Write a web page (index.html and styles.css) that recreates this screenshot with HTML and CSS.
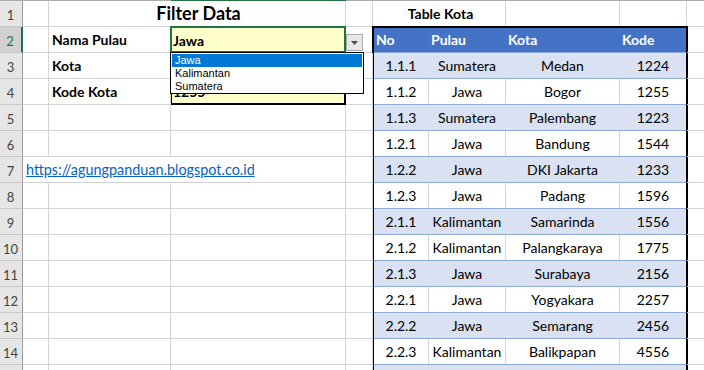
FILE: index.html
```html
<!DOCTYPE html>
<html lang="id">
<head>
    <meta charset="UTF-8">
    <title>Filter Data - Table Kota</title>
    <link rel="stylesheet" href="styles.css">
</head>
<body>
    <div class="sheet">
        <!-- batas bawah header kolom -->
        <div class="bar"></div><div class="bar"></div><div class="bar"></div><div class="bar on"></div><div class="bar"></div>
        <div class="bar"></div><div class="bar"></div><div class="bar"></div><div class="bar"></div><div class="bar"></div>

        <!-- baris 1 -->
        <div class="rh">1</div><div class="c"></div>
        <div class="c span2 title">Filter Data</div>
        <div class="c"></div>
        <div class="c span2 subtitle">Table Kota</div>
        <div class="c"></div><div class="c"></div><div class="c"></div>

        <!-- baris 2 -->
        <div class="rh sel">2</div><div class="c"></div>
        <div class="c b">Nama Pulau</div>
        <div class="pick">
            <div class="cur">Jawa
                <span class="drop-btn"><svg width="7" height="4" viewBox="0 0 7 4"><path d="M0 0h7L3.5 4z" fill="#4d4d4d"/></svg></span>
                <ul class="drop-list">
                    <li class="on">Jawa</li>
                    <li>Kalimantan</li>
                    <li>Sumatera</li>
                </ul>
            </div>
            <div class="val">Bogor</div>
            <div class="val last">1255</div>
        </div>
        <div class="c"></div>
        <div class="kota">
            <div class="kr head"><div>No</div><div>Pulau</div><div>Kota</div><div>Kode</div></div>
            <div class="kr band"><div>1.1.1</div><div>Sumatera</div><div>Medan</div><div>1224</div></div>
            <div class="kr"><div>1.1.2</div><div>Jawa</div><div>Bogor</div><div>1255</div></div>
            <div class="kr band"><div>1.1.3</div><div>Sumatera</div><div>Palembang</div><div>1223</div></div>
            <div class="kr"><div>1.2.1</div><div>Jawa</div><div>Bandung</div><div>1544</div></div>
            <div class="kr band"><div>1.2.2</div><div>Jawa</div><div>DKI Jakarta</div><div>1233</div></div>
            <div class="kr"><div>1.2.3</div><div>Jawa</div><div>Padang</div><div>1596</div></div>
            <div class="kr band"><div>2.1.1</div><div>Kalimantan</div><div>Samarinda</div><div>1556</div></div>
            <div class="kr"><div>2.1.2</div><div>Kalimantan</div><div>Palangkaraya</div><div>1775</div></div>
            <div class="kr band"><div>2.1.3</div><div>Jawa</div><div>Surabaya</div><div>2156</div></div>
            <div class="kr"><div>2.2.1</div><div>Jawa</div><div>Yogyakara</div><div>2257</div></div>
            <div class="kr band"><div>2.2.2</div><div>Jawa</div><div>Semarang</div><div>2456</div></div>
            <div class="kr"><div>2.2.3</div><div>Kalimantan</div><div>Balikpapan</div><div>4556</div></div>
            <div class="kr band"><div></div><div></div><div></div><div></div></div>
        </div>
        <div class="c"></div>

        <!-- baris 3 -->
        <div class="rh">3</div><div class="c"></div><div class="c b">Kota</div><div class="c"></div><div class="c"></div>
        <!-- baris 4 -->
        <div class="rh">4</div><div class="c"></div><div class="c b">Kode Kota</div><div class="c"></div><div class="c"></div>
        <!-- baris 5 -->
        <div class="rh">5</div><div class="c"></div><div class="c"></div><div class="c"></div><div class="c"></div><div class="c"></div>
        <!-- baris 6 -->
        <div class="rh">6</div><div class="c"></div><div class="c"></div><div class="c"></div><div class="c"></div><div class="c"></div>
        <!-- baris 7 -->
        <div class="rh">7</div>
        <div class="c span3 link"><a href="#">https://agungpanduan.blogspot.co.id</a></div>
        <div class="c"></div><div class="c"></div>
        <!-- baris 8 - 15 -->
        <div class="rh">8</div><div class="c"></div><div class="c"></div><div class="c"></div><div class="c"></div><div class="c"></div>
        <div class="rh">9</div><div class="c"></div><div class="c"></div><div class="c"></div><div class="c"></div><div class="c"></div>
        <div class="rh">10</div><div class="c"></div><div class="c"></div><div class="c"></div><div class="c"></div><div class="c"></div>
        <div class="rh">11</div><div class="c"></div><div class="c"></div><div class="c"></div><div class="c"></div><div class="c"></div>
        <div class="rh">12</div><div class="c"></div><div class="c"></div><div class="c"></div><div class="c"></div><div class="c"></div>
        <div class="rh">13</div><div class="c"></div><div class="c"></div><div class="c"></div><div class="c"></div><div class="c"></div>
        <div class="rh">14</div><div class="c"></div><div class="c"></div><div class="c"></div><div class="c"></div><div class="c"></div>
        <div class="rh">15</div><div class="c"></div><div class="c"></div><div class="c"></div><div class="c"></div><div class="c"></div>
    </div>
</body>
</html>
```

FILE: styles.css
```css
* {
    margin: 0;
    padding: 0;
    box-sizing: border-box;
}

body {
    width: 704px;
    height: 370px;
    overflow: hidden;
    background: #fff;
    font-family: Lato, "Liberation Sans", sans-serif;
    font-size: 14px;
    color: #000;
}

.sheet {
    display: grid;
    grid-template-columns: 23px 26px 122px 175px 27px 56px 77px 114px 67px 64px;
    grid-template-rows: 1px repeat(15, 26px);
}

.bar {
    background: #ababab;
}

.bar.on {
    background: #217346;
}

.c {
    border-right: 1px solid #d4d4d4;
    border-bottom: 1px solid #d4d4d4;
    padding-left: 3px;
    line-height: 25px;
    white-space: nowrap;
    overflow: hidden;
}

.rh {
    background: #e6e6e6;
    border-right: 1px solid #9b9b9b;
    border-bottom: 1px solid #c8c8c8;
    text-align: center;
    padding: 2px 1px 0 0;
    line-height: 25px;
    font-size: 13px;
    color: #444;
    overflow: hidden;
}

.rh.sel {
    background: #d2d2d2;
    border-right: 2px solid #217346;
    color: #217346;
}

.b {
    font-weight: bold;
}

.span2 {
    grid-column: span 2;
}

.span3 {
    grid-column: span 3;
}

.title {
    text-align: center;
    font-size: 18px;
    font-weight: bold;
}

.subtitle {
    text-align: center;
    font-weight: bold;
}

.link a {
    color: #0563c1;
    font-size: 14.4px;
    text-decoration: underline;
}

/* sel C2:C4 dengan validasi data */
.pick {
    grid-row: span 3;
    margin: -1px 0 0 -1px;
    border: 2px solid #000;
    background: #ffffcc;
    font-weight: bold;
}

.pick > div {
    height: 26px;
    line-height: 25px;
    padding-left: 1px;
}

.pick .cur {
    position: relative;
    height: 25px;
}

.pick .cur::after {
    content: "";
    position: absolute;
    left: -2px;
    right: -2px;
    top: -2px;
    bottom: 0;
    border: 2px solid #217346;
}

.pick .last {
    height: 24px;
}

.drop-btn {
    position: absolute;
    left: 174px;
    top: 6px;
    width: 17px;
    height: 17px;
    background: #e8e8e8;
    border: 1px solid #a9a9a9;
    display: flex;
    align-items: center;
    justify-content: center;
}

.drop-list {
    position: absolute;
    left: -2px;
    top: 24px;
    width: 194px;
    list-style: none;
    background: #fff;
    border: 1px solid #000;
    padding: 1px 1px 0;
    font-family: "Liberation Sans", Arial, sans-serif;
    font-size: 11px;
    font-weight: normal;
    z-index: 2;
}

.drop-list li {
    height: 13px;
    line-height: 13px;
    padding-left: 3px;
}

.drop-list li.on {
    background: #0078d7;
    color: #fff;
}

/* tabel kota */
.kota {
    grid-column: span 4;
    grid-row: span 14;
    margin: -1px -1px 0 -1px;
    border: 2px solid #000;
    border-bottom: 0;
}

.kr {
    display: grid;
    grid-template-columns: 55px 77px 114px 66px;
    height: 26px;
    border-bottom: 1px solid #8ea9db;
}

.kr div {
    border-right: 1px solid #d4d4d4;
    text-align: center;
    line-height: 25px;
    white-space: nowrap;
}

.kr div:last-child {
    border-right: 0;
}

.kr.band {
    background: #d9e1f2;
}

.kr.band div {
    border-right-color: #d9e1f2;
}

.kr.head {
    height: 25px;
    background: #4472c4;
    color: #fff;
    font-weight: bold;
}

.kr.head div {
    border-right-color: #4472c4;
    text-align: left;
    padding-left: 2px;
    line-height: 24px;
}
```
